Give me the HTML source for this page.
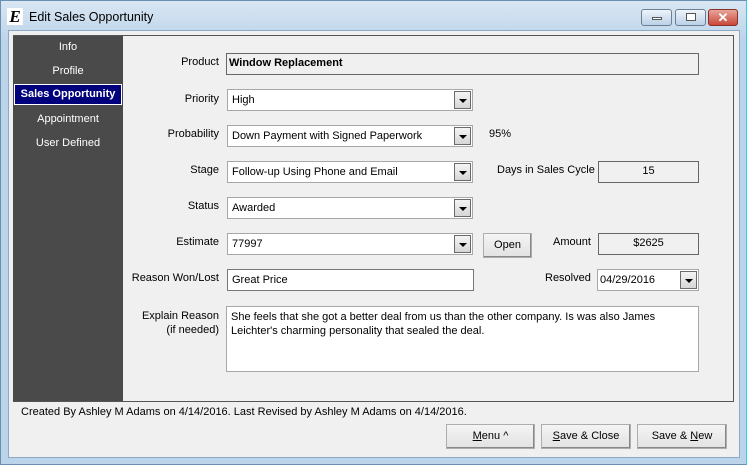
<!DOCTYPE html>
<html><head><style>
*{margin:0;padding:0;box-sizing:border-box}
body{width:747px;height:465px;overflow:hidden;background:#bcd5ec;font-family:"Liberation Sans",sans-serif;font-size:11px;color:#000;position:relative}
.a{position:absolute}
.frame{left:0;top:0;width:747px;height:465px;background:linear-gradient(#d9e6f3,#bcd4ea 40px);border:1px solid #6b8fb3;border-right-color:#2ad0f0}
.client{left:8px;top:30px;width:732px;height:428px;background:#f0f0f0;border:1px solid #8ea9c4}
.side{left:13px;top:35px;width:110px;height:367px;background:#4a4a4a}
.panel{left:13px;top:35px;width:721px;height:367px;border:1px solid #555;border-left:none}
.nav{left:13px;width:110px;text-align:center;color:#fff}
.sel{left:14px;top:84px;width:108px;height:21px;background:#00007d;border:1px solid #fff;color:#fff;font-weight:bold;text-align:center;line-height:19px}
.lbl{text-align:right;width:150px}
.box{background:#fff;border:1px solid #a8a8a8;padding-left:4px;line-height:21px;white-space:nowrap;overflow:hidden}
.ro{background:#f0f0f0;border:1px solid #666;text-align:center;line-height:19px}
.dd{position:absolute;right:1px;top:1px;width:17px;height:18px;border:1px solid #6a6a6a;background:linear-gradient(#f4f4f4,#d6d6d6)}
.dd:after{content:"";position:absolute;left:4px;top:7px;border-left:4px solid transparent;border-right:4px solid transparent;border-top:4px solid #000}
.btn{background:linear-gradient(#f4f4f4,#e2e2e2);border:1px solid #adadad;box-shadow:inset -1px -1px #888;text-align:center;line-height:23px}
.tb{top:9px;height:17px;border:1px solid #6d7f93;border-radius:3px;background:linear-gradient(#eef4fb,#bcd0e6)}
</style></head><body>
<div class="a frame"></div>
<div class="a" style="left:7px;top:8px;width:16px;height:17px;font:italic bold 17px 'Liberation Serif',serif;line-height:17px;color:#000;background:#fff;text-align:center">E</div>
<div class="a" style="left:29px;top:10px;font-size:12.5px">Edit Sales Opportunity</div>
<div class="a tb" style="left:641px;width:31px"><div class="a" style="left:10px;top:7px;width:10px;height:3px;background:#fff;border:1px solid #555"></div></div>
<div class="a tb" style="left:675px;width:31px"><div class="a" style="left:10px;top:3px;width:10px;height:8px;background:#fff;border:1px solid #555"></div></div>
<div class="a tb" style="left:708px;width:30px;background:linear-gradient(#e8a59a,#c9473a);border-color:#8a3028;color:#fff;font-weight:bold;text-align:center;line-height:15px;font-size:13px">✕</div>
<div class="a client"></div>
<div class="a side"></div>
<div class="a panel"></div>
<div class="a nav" style="top:41px">Info</div>
<div class="a nav" style="top:65px">Profile</div>
<div class="a sel">Sales Opportunity</div>
<div class="a nav" style="top:113px">Appointment</div>
<div class="a nav" style="top:137px">User Defined</div>

<div class="a lbl" style="left:69px;top:56px">Product</div>
<div class="a ro" style="left:226px;top:53px;width:473px;height:22px;text-align:left;font-weight:bold;padding-left:2px;line-height:18px">Window Replacement</div>
<div class="a lbl" style="left:69px;top:93px">Priority</div>
<div class="a box" style="left:227px;top:89px;width:246px;height:22px">High<span class="dd"></span></div>
<div class="a lbl" style="left:69px;top:128px">Probability</div>
<div class="a box" style="left:227px;top:125px;width:246px;height:22px">Down Payment with Signed Paperwork<span class="dd"></span></div>
<div class="a" style="left:489px;top:128px">95%</div>
<div class="a lbl" style="left:69px;top:164px">Stage</div>
<div class="a box" style="left:227px;top:161px;width:246px;height:22px">Follow-up Using Phone and Email<span class="dd"></span></div>
<div class="a" style="left:497px;top:164px">Days in Sales Cycle</div>
<div class="a ro" style="left:598px;top:161px;width:101px;height:22px">15</div>
<div class="a lbl" style="left:69px;top:200px">Status</div>
<div class="a box" style="left:227px;top:197px;width:246px;height:22px">Awarded<span class="dd"></span></div>
<div class="a lbl" style="left:69px;top:236px">Estimate</div>
<div class="a box" style="left:227px;top:233px;width:246px;height:22px">77997<span class="dd"></span></div>
<div class="a btn" style="left:483px;top:233px;width:49px;height:25px">Open</div>
<div class="a" style="left:553px;top:236px">Amount</div>
<div class="a ro" style="left:598px;top:233px;width:101px;height:22px">$2625</div>
<div class="a lbl" style="left:69px;top:272px">Reason Won/Lost</div>
<div class="a box" style="left:227px;top:269px;width:247px;height:22px;border-color:#777">Great Price</div>
<div class="a" style="left:545px;top:272px">Resolved</div>
<div class="a box" style="left:597px;top:269px;width:102px;height:22px;padding-left:2px">04/29/2016<span class="dd"></span></div>
<div class="a lbl" style="left:69px;top:309px;line-height:14px">Explain Reason<br>(if needed)</div>
<div class="a box" style="left:226px;top:306px;width:473px;height:66px;white-space:normal;line-height:14px;padding-top:3px">She feels that she got a better deal from us than the other company. Is was also James Leichter's charming personality that sealed the deal.</div>

<div class="a" style="left:21px;top:406px">Created By Ashley M Adams on 4/14/2016. Last Revised by Ashley M Adams on 4/14/2016.</div>
<div class="a btn" style="left:446px;top:424px;width:89px;height:25px"><u>M</u>enu ^</div>
<div class="a btn" style="left:541px;top:424px;width:90px;height:25px"><u>S</u>ave &amp; Close</div>
<div class="a btn" style="left:637px;top:424px;width:90px;height:25px">Save &amp; <u>N</u>ew</div>
</body></html>
